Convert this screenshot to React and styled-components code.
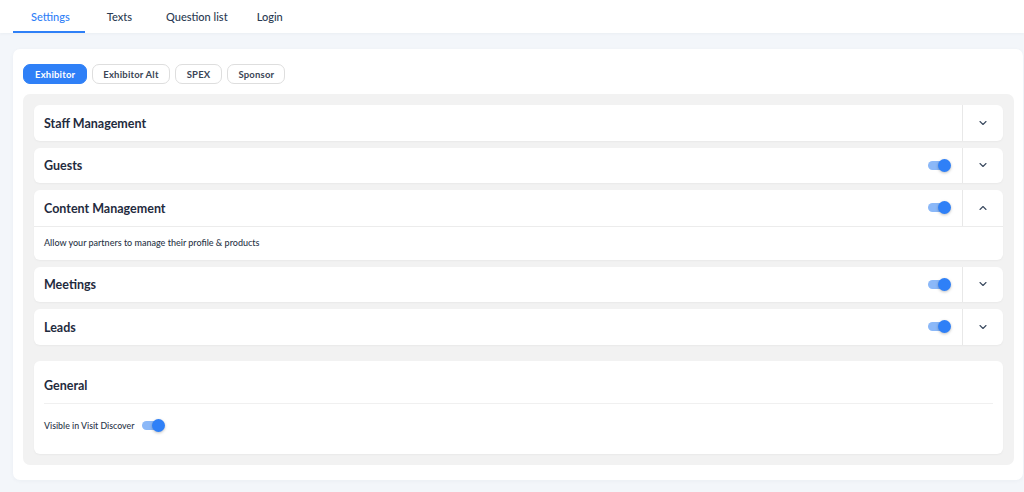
import React, { useState } from 'react';
import styled, { createGlobalStyle } from 'styled-components';
import { ChevronDown, ChevronUp } from 'lucide-react';

const GlobalStyle = createGlobalStyle`
  html, body {
    margin: 0;
    padding: 0;
    background: #f3f6fa;
    font-family: 'Lato', 'Noto Sans', sans-serif;
    color: #1e2a3b;
  }
  * { box-sizing: border-box; }
`;

const Page = styled.div`
  display: flex;
  flex-direction: column;
  min-height: 492px;
`;

const TabBar = styled.div`
  display: flex;
  height: 33px;
  background: #fff;
  padding-left: 13px;
  box-shadow: 0 1px 3px rgba(20, 40, 80, 0.04);
`;

const Tab = styled.div`
  display: flex;
  align-items: center;
  justify-content: center;
  height: 33px;
  padding: 2px ${p => p.$right}px 0 ${p => p.$left}px;
  font-size: 11px;
  font-weight: 500;
  color: ${p => (p.$active ? '#2f80f7' : '#2a3a52')};
  border-bottom: 2px solid ${p => (p.$active ? '#2f80f7' : 'transparent')};
`;

const Body = styled.div`
  padding: 16px 1px 12px 13px;
`;

const Card = styled.div`
  background: #fff;
  border-radius: 7px;
  padding: 15px 9px 15px 10px;
  box-shadow: 0 1px 4px rgba(20, 40, 80, 0.04);
`;

const Pills = styled.div`
  display: flex;
  gap: 5px;
  margin-bottom: 10px;
`;

const Pill = styled.button`
  height: 20px;
  padding: 0 ${p => p.$pad}px;
  border-radius: 7px;
  font-family: inherit;
  font-size: 9.5px;
  font-weight: 700;
  letter-spacing: 0.2px;
  cursor: pointer;
  border: 1px solid ${p => (p.$active ? '#2f80f7' : '#dedede')};
  background: ${p => (p.$active ? '#2f80f7' : '#fff')};
  color: ${p => (p.$active ? '#fff' : '#3a4556')};
`;

const Group = styled.div`
  background: #f2f2f2;
  border-radius: 7px;
  padding: 11px;
  display: flex;
  flex-direction: column;
  gap: 7px;
`;

const Section = styled.div`
  background: #fff;
  border-radius: 6px;
  box-shadow: 0 1px 2px rgba(0, 0, 0, 0.04);
`;

const Header = styled.div`
  display: flex;
  align-items: center;
  height: 35.5px;
`;

const Title = styled.div`
  flex: 1;
  padding-left: 10px;
  padding-top: 1px;
  font-size: 12.5px;
  font-weight: 700;
  color: #1f2b3e;
`;

const ToggleSlot = styled.div`
  display: flex;
  align-items: center;
  padding-right: 12px;
`;

const Track = styled.div`
  position: relative;
  width: 22px;
  height: 9px;
  border-radius: 5px;
  background: #8bb8f8;
  cursor: pointer;
`;

const Knob = styled.span`
  position: absolute;
  top: -2px;
  left: ${p => (p.$on ? '10px' : '-1px')};
  width: 13px;
  height: 13px;
  border-radius: 50%;
  background: #2f80f7;
  box-shadow: 0 1px 3px rgba(0, 0, 0, 0.25);
`;

const ChevronCell = styled.div`
  width: 41px;
  height: 100%;
  border-left: 1px solid #e8e8e8;
  display: flex;
  align-items: center;
  justify-content: center;
  color: #3a4a60;
`;

const Description = styled.div`
  border-top: 1px solid #ececec;
  padding: 10px 10px 12px;
  font-size: 9px;
  font-weight: 500;
  line-height: 11px;
  color: #2a3548;
`;

const GeneralCard = styled.div`
  background: #fff;
  border-radius: 6px;
  margin-top: 9px;
  padding: 16px 10px 21px;
  box-shadow: 0 1px 2px rgba(0, 0, 0, 0.04);
`;

const GeneralTitle = styled.div`
  font-size: 12.5px;
  font-weight: 700;
  line-height: 15px;
  color: #1f2b3e;
  padding-top: 1px;
  padding-bottom: 10px;
  border-bottom: 1px solid #f0f0f0;
`;

const OptionRow = styled.div`
  display: flex;
  align-items: center;
  gap: 8px;
  height: 14px;
  margin-top: 15px;
  font-size: 8.8px;
  font-weight: 500;
  color: #2a3548;
`;

const Toggle = ({ on = true }) => (
  <Track>
    <Knob $on={on} />
  </Track>
);

const sections = [
  { title: 'Staff Management', toggle: false },
  { title: 'Guests', toggle: true },
  {
    title: 'Content Management',
    toggle: true,
    open: true,
    text: 'Allow your partners to manage their profile & products',
  },
  { title: 'Meetings', toggle: true },
  { title: 'Leads', toggle: true },
];

const tabs = [
  { label: 'Settings', left: 18, right: 15 },
  { label: 'Texts', left: 22, right: 17 },
  { label: 'Question list', left: 17, right: 15 },
  { label: 'Login', left: 14, right: 17 },
];

const pills = [
  { label: 'Exhibitor', pad: 11 },
  { label: 'Exhibitor Alt', pad: 10 },
  { label: 'SPEX', pad: 11 },
  { label: 'Sponsor', pad: 10 },
];

export default function App() {
  const [tab] = useState('Settings');
  const [pill, setPill] = useState('Exhibitor');

  return (
    <Page>
      <GlobalStyle />
      <TabBar>
        {tabs.map(t => (
          <Tab key={t.label} $left={t.left} $right={t.right} $active={t.label === tab}>
            {t.label}
          </Tab>
        ))}
      </TabBar>
      <Body>
        <Card>
          <Pills>
            {pills.map(p => (
              <Pill
                key={p.label}
                $pad={p.pad}
                $active={p.label === pill}
                onClick={() => setPill(p.label)}
              >
                {p.label}
              </Pill>
            ))}
          </Pills>
          <Group>
            {sections.map(s => (
              <Section key={s.title}>
                <Header>
                  <Title>{s.title}</Title>
                  {s.toggle && (
                    <ToggleSlot>
                      <Toggle />
                    </ToggleSlot>
                  )}
                  <ChevronCell>
                    {s.open ? (
                      <ChevronUp size={12} strokeWidth={2.2} />
                    ) : (
                      <ChevronDown size={12} strokeWidth={2.2} />
                    )}
                  </ChevronCell>
                </Header>
                {s.open && <Description>{s.text}</Description>}
              </Section>
            ))}
            <GeneralCard>
              <GeneralTitle>General</GeneralTitle>
              <OptionRow>
                Visible in Visit Discover
                <Toggle />
              </OptionRow>
            </GeneralCard>
          </Group>
        </Card>
      </Body>
    </Page>
  );
}
